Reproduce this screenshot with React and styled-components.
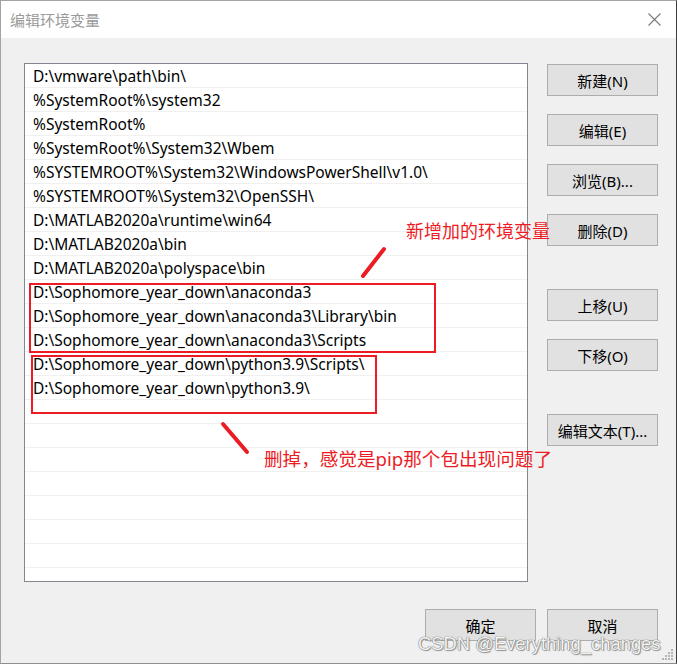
import React from 'react';
import styled, { createGlobalStyle } from 'styled-components';

const GlobalStyle = createGlobalStyle`
  html, body {
    margin: 0;
    padding: 0;
    background: #ffffff;
  }
  body {
    font-family: 'Noto Sans', 'Noto Sans CJK SC', sans-serif;
  }
`;

const paths = [
  'D:\\vmware\\path\\bin\\',
  '%SystemRoot%\\system32',
  '%SystemRoot%',
  '%SystemRoot%\\System32\\Wbem',
  '%SYSTEMROOT%\\System32\\WindowsPowerShell\\v1.0\\',
  '%SYSTEMROOT%\\System32\\OpenSSH\\',
  'D:\\MATLAB2020a\\runtime\\win64',
  'D:\\MATLAB2020a\\bin',
  'D:\\MATLAB2020a\\polyspace\\bin',
  'D:\\Sophomore_year_down\\anaconda3',
  'D:\\Sophomore_year_down\\anaconda3\\Library\\bin',
  'D:\\Sophomore_year_down\\anaconda3\\Scripts',
  'D:\\Sophomore_year_down\\python3.9\\Scripts\\',
  'D:\\Sophomore_year_down\\python3.9\\',
];

// 오른쪽 버튼 그룹
const sideGroups = [
  ['新建(N)', '编辑(E)', '浏览(B)...', '删除(D)'],
  ['上移(U)', '下移(O)'],
  ['编辑文本(T)...'],
];

export default function App() {
  const rows = [...paths];
  while (rows.length < 22) rows.push('');

  return (
    <>
      <GlobalStyle />
      <Window>
        <TitleBar>
          <Title>编辑环境变量</Title>
          <CloseIcon width="13" height="13" viewBox="0 0 13 13">
            <path d="M0.5 0.5 L12.5 12.5 M12.5 0.5 L0.5 12.5" stroke="#7a7a7a" strokeWidth="1.1" />
          </CloseIcon>
        </TitleBar>

        <Body>
          <ListBox>
            {rows.map((p, i) => (
              <Row key={i}>{p}</Row>
            ))}
          </ListBox>
          <SideColumn>
            {sideGroups.map((group, gi) => (
              <SideGroup key={gi}>
                {group.map((label) => (
                  <Button key={label}>{label}</Button>
                ))}
              </SideGroup>
            ))}
          </SideColumn>
        </Body>

        <Footer>
          <Button>确定</Button>
          <Button>取消</Button>
        </Footer>

        {/* 빨간 표시 (스크린샷 위에 그린 주석) */}
        <RedBox $top={282} $left={28} $width={407} $height={70} />
        <RedBox $top={354} $left={30} $width={346} $height={59} />

        <Marks width="677" height="664" viewBox="0 0 677 664">
          <line x1="363" y1="276" x2="384" y2="249" stroke="#ed1c24" strokeWidth="4" strokeLinecap="round" />
          <line x1="223" y1="424" x2="247" y2="452" stroke="#ed1c24" strokeWidth="4" strokeLinecap="round" />
        </Marks>

        <Note $top={218} $left={405}>新增加的环境变量</Note>
        <Note $top={446} $left={263} $size={18.6}>删掉，感觉是pip那个包出现问题了</Note>

        <Watermark>CSDN @Everything_changes</Watermark>

        <Grip width="12" height="12" viewBox="0 0 12 12">
          {[
            [9, 0], [6, 3], [9, 3], [3, 6], [6, 6], [9, 6], [0, 9], [3, 9], [6, 9], [9, 9],
          ].map(([x, y], i) => (
            <rect key={i} x={x} y={y} width="2" height="2" fill="#b5b5b5" />
          ))}
        </Grip>
      </Window>
    </>
  );
}

const Window = styled.div`
  position: relative;
  width: 677px;
  height: 664px;
  box-sizing: border-box;
  background: #f0f0f0;
  border-left: 1px solid #a3a3a3;
  border-top: 1px solid #a3a3a3;
  border-bottom: 1px solid #8e8e8e;
  border-right: 1px solid #3d3d3d;
  display: flex;
  flex-direction: column;
  overflow: hidden;
`;

const TitleBar = styled.div`
  height: 37px;
  background: #ffffff;
  display: flex;
  align-items: center;
  justify-content: space-between;
  padding: 0 15px 0 9px;
  flex-shrink: 0;
`;

const Title = styled.div`
  font-family: 'Noto Sans CJK SC', sans-serif;
  font-size: 15px;
  color: #9a9a9a;
  margin-top: -1px;
`;

const CloseIcon = styled.svg`
  display: block;
`;

const Body = styled.div`
  display: flex;
  gap: 19px;
  padding: 25px 18px 0 23px;
`;

const ListBox = styled.div`
  width: 504px;
  height: 519px;
  box-sizing: border-box;
  background: #ffffff;
  border: 1px solid #828790;
  overflow: hidden;
`;

const Row = styled.div`
  height: 24px;
  box-sizing: border-box;
  border-bottom: 1px solid #f0f0f0;
  padding: 1px 0 0 8px;
  font-family: 'Noto Sans', 'Noto Sans CJK SC', sans-serif;
  font-size: 15.5px;
  line-height: 23px;
  color: #000000;
  white-space: nowrap;
`;

const SideColumn = styled.div`
  display: flex;
  flex-direction: column;
  gap: 43px;
  padding-top: 1px;
`;

const SideGroup = styled.div`
  display: flex;
  flex-direction: column;
  gap: 18px;
`;

const Button = styled.div`
  width: 111px;
  height: 32px;
  box-sizing: border-box;
  background: #e1e1e1;
  border: 1px solid #adadad;
  display: flex;
  align-items: center;
  justify-content: center;
  font-family: 'Noto Sans', 'Noto Sans CJK SC', sans-serif;
  font-size: 15px;
  color: #000000;
`;

const Footer = styled.div`
  display: flex;
  justify-content: flex-end;
  gap: 11px;
  padding: 27px 18px 0 0;
`;

const RedBox = styled.div`
  position: absolute;
  top: ${(p) => p.$top}px;
  left: ${(p) => p.$left}px;
  width: ${(p) => p.$width}px;
  height: ${(p) => p.$height}px;
  box-sizing: border-box;
  border: 2px solid #ed1c24;
`;

const Marks = styled.svg`
  position: absolute;
  top: -1px;
  left: -1px;
  pointer-events: none;
`;

const Note = styled.div`
  position: absolute;
  top: ${(p) => p.$top}px;
  left: ${(p) => p.$left}px;
  font-family: 'Noto Sans', 'Noto Sans CJK SC', sans-serif;
  font-size: ${(p) => p.$size || 18}px;
  line-height: 24px;
  color: #ed1c24;
  white-space: nowrap;
`;

const Watermark = styled.div`
  position: absolute;
  left: 417px;
  top: 631px;
  font-family: 'Liberation Sans', sans-serif;
  font-size: 18.4px;
  line-height: 24px;
  color: #f4f4f4;
  white-space: nowrap;
  text-shadow: 0 0 1px #6f6f6f, 0 0 1px #6f6f6f, 1px 1px 1px #9a9a9a;
`;

const Grip = styled.svg`
  position: absolute;
  right: 2px;
  bottom: 2px;
`;
